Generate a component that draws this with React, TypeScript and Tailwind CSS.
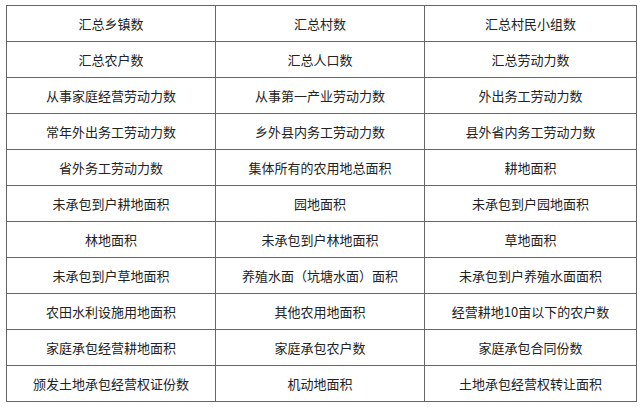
const rows: string[][] = [
  ["汇总乡镇数", "汇总村数", "汇总村民小组数"],
  ["汇总农户数", "汇总人口数", "汇总劳动力数"],
  ["从事家庭经营劳动力数", "从事第一产业劳动力数", "外出务工劳动力数"],
  ["常年外出务工劳动力数", "乡外县内务工劳动力数", "县外省内务工劳动力数"],
  ["省外务工劳动力数", "集体所有的农用地总面积", "耕地面积"],
  ["未承包到户耕地面积", "园地面积", "未承包到户园地面积"],
  ["林地面积", "未承包到户林地面积", "草地面积"],
  ["未承包到户草地面积", "养殖水面（坑塘水面）面积", "未承包到户养殖水面面积"],
  ["农田水利设施用地面积", "其他农用地面积", "经营耕地10亩以下的农户数"],
  ["家庭承包经营耕地面积", "家庭承包农户数", "家庭承包合同份数"],
  ["颁发土地承包经营权证份数", "机动地面积", "土地承包经营权转让面积"],
];

export default function App() {
  return (
    <div className="bg-white w-[641px] h-[407px] pt-[5px] pl-[6px] font-['Noto_Sans_CJK_SC','Microsoft_YaHei',sans-serif] text-[13px] text-[#222]">
      <table className="w-[630px] border-collapse table-fixed">
        <colgroup>
          <col className="w-[209px]" />
          <col className="w-[209px]" />
          <col className="w-[212px]" />
        </colgroup>
        <tbody>
          {rows.map((r, i) => (
            <tr key={i} className="h-[36px]">
              {r.map((c, j) => (
                <td key={j} className="border border-[#666] text-center align-middle p-0 leading-none">
                  {c}
                </td>
              ))}
            </tr>
          ))}
        </tbody>
      </table>
    </div>
  );
}
